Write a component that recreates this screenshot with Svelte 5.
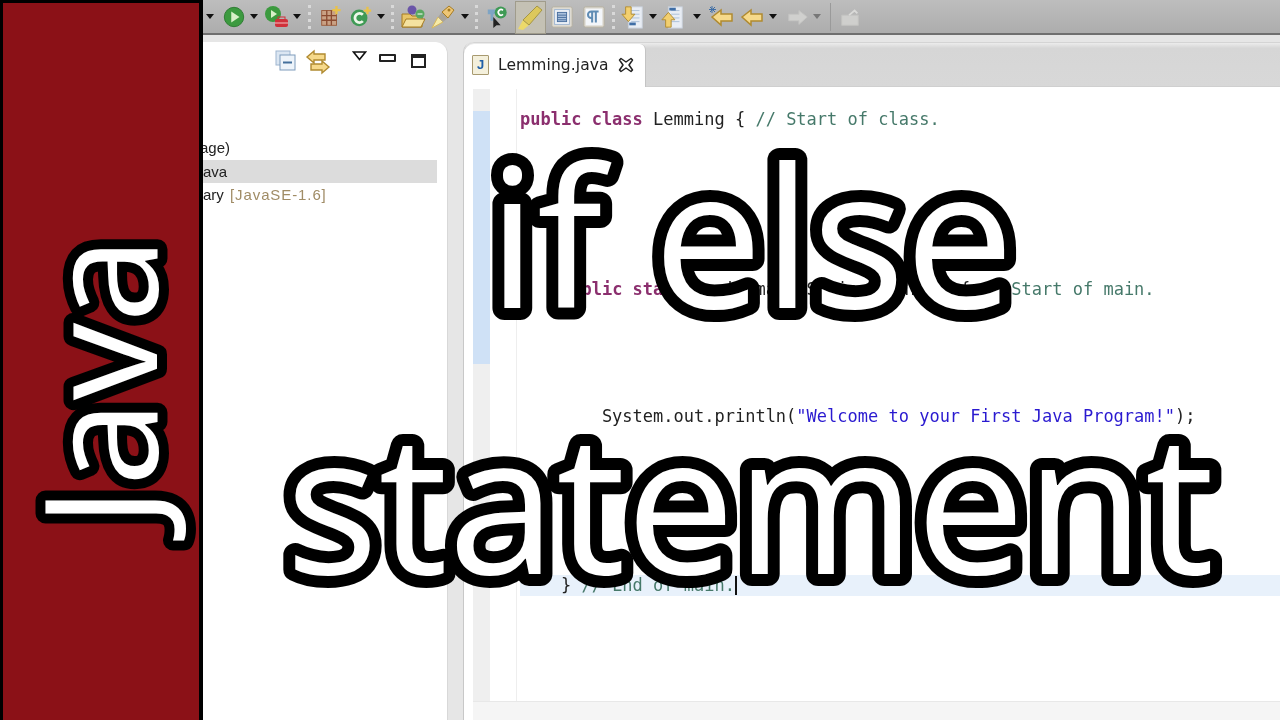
<script lang="ts">
  // toolbar icons by centre x, so the gaps come out of the data
  const tools = [
    { k: 'drop', x: 210, s: 8 }, { k: 'run', x: 234, s: 24 }, { k: 'drop', x: 254, s: 8 },
    { k: 'ext', x: 276, s: 26 }, { k: 'drop', x: 297, s: 8 }, { k: 'sep', x: 309, s: 3 },
    { k: 'grid', x: 330, s: 24 }, { k: 'newc', x: 361, s: 24 }, { k: 'drop', x: 381, s: 8 },
    { k: 'sep', x: 392, s: 3 }, { k: 'open', x: 413, s: 26 }, { k: 'brush', x: 443, s: 26 },
    { k: 'drop', x: 465, s: 8 }, { k: 'sep', x: 476, s: 3 }, { k: 'hier', x: 497, s: 24 },
    { k: 'mark', x: 530, s: 31 }, { k: 'doc', x: 562, s: 24 }, { k: 'para', x: 594, s: 24 },
    { k: 'sep', x: 613, s: 3 }, { k: 'down', x: 633, s: 24 }, { k: 'drop', x: 653, s: 8 },
    { k: 'up', x: 673, s: 24 }, { k: 'drop', x: 697, s: 8 }, { k: 'last', x: 722, s: 26 },
    { k: 'back', x: 752, s: 26 }, { k: 'drop', x: 773, s: 8 }, { k: 'fwd', x: 798, s: 24 },
    { k: 'dropoff', x: 817, s: 8 }, { k: 'sepoff', x: 830, s: 2 }, { k: 'off', x: 850, s: 24 },
  ];
  const placed = tools.map((t, i) => {
    const prevEnd = i === 0 ? 0 : tools[i - 1].x + tools[i - 1].s / 2;
    return { ...t, gap: t.x - t.s / 2 - prevEnd };
  });
</script>

<div class="page">
  <header class="toolbar">
    {#each placed as t}
      <span class="tool" style={`margin-left:${t.gap}px;width:${t.s}px`}>
        {#if t.k === 'drop' || t.k === 'dropoff'}
          <svg viewBox="0 0 8 5" width="8" height="5"><path d="M0 0h8L4 5z" fill={t.k === 'drop' ? '#111' : '#777'} /></svg>
        {:else if t.k === 'sep'}
          <i class="dots"></i>
        {:else if t.k === 'sepoff'}
          <i class="rule"></i>
        {:else if t.k === 'mark'}
          <svg class="markicon" viewBox="0 0 31 33" width="31" height="33">
            <rect x="0.500" y="0.500" width="30" height="32" fill="#c4c1b4" stroke="#a09c8c" />
            <path d="M3 28l5-9 6 5-6 5z" fill="#ecd96a" />
            <path d="M8 19L22 5l5 4-13 15z" fill="#ddc85c" stroke="#a59645" />
          </svg>
        {:else}
          <svg viewBox="0 0 26 26" width={t.s} height="26">
            {#if t.k === 'run'}
              <circle cx="13" cy="13" r="10.500" fill="#3c9a3f" stroke="#2b7a30" />
              <path d="M10 7l9 6-9 6z" fill="#d8f0c8" />
            {:else if t.k === 'ext'}
              <circle cx="10" cy="10" r="8" fill="#3c9a3f" />
              <path d="M8 6l6 4-6 4z" fill="#d8f0c8" />
              <rect x="12" y="15" width="13" height="8" rx="2" fill="#d0303a" />
              <rect x="15" y="13" width="7" height="3" fill="none" stroke="#d0303a" />
              <path d="M12 19h13" stroke="#f3c0c0" />
            {:else if t.k === 'grid'}
              <rect x="4" y="6" width="16" height="16" fill="#c9a184" stroke="#9a5b3b" />
              <path d="M9.500 6v16M14.500 6v16M4 11.500h16M4 16.500h16" stroke="#8a4a30" stroke-width="1.400" />
              <path d="M20 1v9M15.500 5.500h9" stroke="#e9c24a" stroke-width="2.500" />
            {:else if t.k === 'newc'}
              <circle cx="11" cy="14" r="9" fill="#3f9a55" />
              <path d="M15 10.500a5 5 0 1 0 0 7" fill="none" stroke="#eef7ea" stroke-width="3" />
              <path d="M20 2v8M16 6h8" stroke="#e9c24a" stroke-width="2.500" />
            {:else if t.k === 'open'}
              <path d="M2 10h8l2 2h10v11H2z" fill="#e8c568" stroke="#a67c22" />
              <path d="M2 23l4-8h19l-4 8z" fill="#f5e2a0" stroke="#a67c22" />
              <circle cx="12" cy="6" r="4.500" fill="#6a55a8" />
              <circle cx="20" cy="10" r="4.500" fill="#58a860" />
              <path d="M17.500 10h5" stroke="#fff" />
            {:else if t.k === 'brush'}
              <path d="M2 24l6-11 5 5z" fill="#f6eaa8" stroke="#d8b85a" />
              <path d="M8 13l4-5 6 6-5 4z" fill="#a9a49a" />
              <path d="M12 8l7-6 5 4-6 8z" fill="#eec675" stroke="#a67c22" />
              <circle cx="19" cy="6" r="1.500" fill="#a67c22" />
            {:else if t.k === 'hier'}
              <path d="M3 5h9v5H9v7H6v-7H3z" fill="#7ea4c4" />
              <circle cx="17" cy="8" r="6.500" fill="#3f9a55" />
              <path d="M19.500 5.800a3 3 0 1 0 0 4.400" fill="none" stroke="#fff" stroke-width="1.800" />
              <path d="M9 13v12l3.500-3 4.500 0z" fill="#222" />
            {:else if t.k === 'doc'}
              <rect x="2" y="2" width="22" height="22" rx="2" fill="#dedbd2" stroke="#b3ae9e" />
              <rect x="5" y="5" width="16" height="16" fill="#eef2f8" stroke="#9db4d0" />
              <rect x="8" y="8" width="10" height="10" fill="#a9c0dc" stroke="#456c9c" />
              <path d="M8 11h10M8 13.500h10M8 16h10" stroke="#456c9c" />
            {:else if t.k === 'para'}
              <rect x="2" y="2" width="22" height="22" rx="2" fill="#dedbd2" stroke="#b3ae9e" />
              <rect x="4" y="4" width="18" height="18" fill="#f3f6fa" />
              <path d="M11 19V7h-1a3.500 3.500 0 0 0 0 7h1M11 7h7M15 7v12" fill="none" stroke="#5f8cb4" stroke-width="2.200" />
            {:else if t.k === 'down' || t.k === 'up'}
              <rect x="8" y="2" width="15" height="23" fill="#e8edf4" stroke="#c9d1dc" />
              <path d="M11 6h9M11 10h9M11 14h9M11 18h9" stroke="#a9bfd8" />
              <rect x="9" y={t.k === 'down' ? 19 : 3} width="7" height="3" fill="#3f6ea6" />
              {#if t.k === 'down'}
                <path d="M5 2h6v8h4l-7 8-7-8h4z" fill="#f2cf6f" stroke="#b08a30" />
              {:else}
                <path d="M8 8l7 8h-4v8H5v-8H1z" fill="#f2cf6f" stroke="#b08a30" />
              {/if}
            {:else if t.k === 'last' || t.k === 'back'}
              <path d="M3 13l9-7v4h11v7H12v4z" fill="#f6d98a" stroke="#b08a30" stroke-width="1.500" />
              {#if t.k === 'last'}
                <path d="M3 2v7M0 5.500h7M1 3l5 5M6 3L1 8" stroke="#3f6ea6" />
              {/if}
            {:else if t.k === 'fwd'}
              <path d="M23 13l-9-7v4H3v7h11v4z" fill="#d0d0ce" stroke="#c4c4c2" />
            {:else if t.k === 'off'}
              <path d="M4 11h18v11H4z" fill="#cfcfcd" stroke="#c2c2c0" />
              <path d="M12 11l6-5 3 3" fill="none" stroke="#dadad8" stroke-width="2" />
            {/if}
          </svg>
        {/if}
      </span>
    {/each}
  </header>

  <div class="workbench">
    <aside class="explorer">
      <div class="view-tools">
        <svg viewBox="0 0 22 22" width="22" height="22">
          <rect x="1" y="1" width="14" height="14" fill="#dbe6f2" stroke="#9fb6cf" />
          <rect x="5" y="5" width="15" height="15" fill="#eef4fa" stroke="#7e9cbc" />
          <path d="M8 12.500h9" stroke="#44709c" stroke-width="2" />
        </svg>
        <svg class="link" viewBox="0 0 26 26" width="26" height="26">
          <path d="M2 8l7-6v3h11v6H9v3z" fill="#f6d98a" stroke="#b08a30" stroke-width="1.400" />
          <path d="M24 18l-7-6v3H6v6h11v3z" fill="#f6d98a" stroke="#b08a30" stroke-width="1.400" />
        </svg>
        <svg class="tri" viewBox="0 0 15 10" width="15" height="10"><path d="M1.500 1h12L7.500 8.500z" fill="#fff" stroke="#111" stroke-width="1.600" /></svg>
        <span class="min"></span>
        <span class="max"></span>
      </div>
      <ul class="tree">
        <li class="pkg">age)</li>
        <li class="sel">ava</li>
        <li>ary <span class="lib">[JavaSE-1.6]</span></li>
      </ul>
    </aside>

    <main class="editor">
      <div class="tabs">
        <div class="tab">
          <span class="jicon">J</span>
          <span class="tabname">Lemming.java</span>
          <svg viewBox="0 0 16 16" width="16" height="16"><path d="M3 1.500L8 5l5-3.500 1.500 1.500L11 8l3.500 5-1.500 1.500L8 11l-5 3.500L1.500 13 5 8 1.500 3z" fill="#fff" stroke="#222" stroke-width="1.500" stroke-linejoin="round" /></svg>
        </div>
      </div>
      <div class="pane">
        <div class="gutter"><div class="fold"></div></div>
        <div class="margin"></div>
        <pre class="code"><span class="line"><b>public class</b> Lemming &#123; <em>// Start of class.</em></span>
<span class="line"> </span>
<span class="line"> </span>
<span class="line"> </span>
<span class="line">    <b>public static</b> void main(String[] args) &#123; <em>// Start of main.</em></span>
<span class="line"> </span>
<span class="line"> </span>
<span class="line">        System.out.println(<u>"Welcome to your First Java Program!"</u>);</span>
<span class="line"> </span>
<span class="line"> </span>
<span class="line"> </span>
<span class="line cur">    &#125; <em>// End of main.</em><i class="caret"></i></span></pre>
      </div>
      <div class="editor-foot"></div>
    </main>
  </div>

  <div class="banner"></div>
  <svg class="overlay" viewBox="0 0 1280 720" width="1280" height="720">
    <text class="big java" transform="translate(157 528) rotate(-90)">Java</text>
    <text class="big" x="751" y="308" text-anchor="middle">if else</text>
    <text class="big" x="750" y="574" text-anchor="middle">statement</text>
  </svg>
</div>

<style>
  :global(body) { margin: 0; }
  .page {
    position: relative;
    width: 1280px;
    height: 720px;
    overflow: hidden;
    background: #eeeeee;
    font-family: "DejaVu Sans", sans-serif;
  }

  .toolbar {
    display: flex;
    align-items: center;
    height: 33px;
    background: linear-gradient(#bdbdbd, #adadad);
    border-bottom: 2px solid #6f6f6f;
    filter: blur(0.5px);
  }
  .tool { position: relative; display: flex; justify-content: center; align-items: center; flex: none; }
  .dots { display: block; width: 3px; height: 24px; background: repeating-linear-gradient(#d9d9d9 0 3px, transparent 3px 7px); }
  .rule { display: block; width: 1px; height: 28px; background: #9a9a9a; }
  .markicon { flex: none; margin-top: 2px; }

  .workbench { display: flex; height: 685px; padding-top: 7px; box-sizing: border-box; background: #e6e6e6; }
  .explorer {
    width: 244px;
    margin-left: 203px;
    background: #fff;
    border-top-right-radius: 12px;
    border-right: 1px solid #d8d8d8;
    flex: none;
  }
  .view-tools { display: flex; align-items: flex-start; height: 40px; padding: 8px 0 0 72px; box-sizing: border-box; filter: blur(0.4px); }
  .link { margin-left: 8px; margin-top: -1px; }
  .tri { margin-left: 21px; margin-top: 1px; }
  .min { width: 13px; height: 4px; border: 2px solid #222; border-radius: 1px; margin: 4px 0 0 12px; background: #fff; }
  .max { width: 11px; height: 8px; border: 2px solid #222; border-top-width: 4px; margin: 4px 0 0 15px; background: #fff; }

  .tree {
    list-style: none;
    margin: 54px 0 0;
    padding: 0;
    width: 234px;
    overflow: hidden;
    font-family: "Liberation Sans", sans-serif;
    font-size: 15px;
    color: #222;
    filter: blur(0.3px);
  }
  .tree li { height: 24px; line-height: 24px; }
  .tree .pkg { text-indent: -3px; }
  .tree .sel { background: #dcdcdc; height: 23px; line-height: 23px; }
  .lib { color: #a08c66; letter-spacing: 0.900px; margin-left: 2px; }

  .editor {
    margin-left: 15px;
    flex: 1;
    display: flex;
    flex-direction: column;
    min-width: 0;
    background: #fff;
    border-left: 1px solid #c8c8c8;
    border-top-left-radius: 10px;
  }
  .tabs {
    height: 45px;
    flex: none;
    display: flex;
    align-items: flex-end;
    background: linear-gradient(#ececec, #d6d6d6 12%, #d8d8d8);
    border-top: 1px solid #d4d4d4;
    box-sizing: border-box;
    border-top-left-radius: 10px;
    border-bottom: 1px solid #cfcfcf;
  }
  .tab {
    display: flex;
    align-items: center;
    gap: 9px;
    height: 43px;
    width: 182px;
    box-sizing: border-box;
    padding: 0 0 2px 8px;
    background: #fff;
    border-radius: 10px 6px 0 0;
    border-right: 1px solid #c4c4c4;
    margin-bottom: -1px;
    filter: blur(0.3px);
  }
  .jicon {
    width: 17px;
    height: 20px;
    box-sizing: border-box;
    border: 1px solid #a89a70;
    background: #f4f0dc;
    border-radius: 1px;
    color: #1f5fa8;
    font: bold 13px/18px "Liberation Sans", sans-serif;
    text-align: center;
  }
  .tabname { font-size: 15.500px; font-family: "DejaVu Sans", sans-serif; color: #222; letter-spacing: 0.100px; }

  .pane { flex: 1; display: flex; background: #fff; margin-left: 9px; padding-top: 2px; min-height: 0; }
  .gutter { width: 17px; height: 100%; background: #efefef; flex: none; padding-top: 22px; box-sizing: border-box; }
  .fold { height: 253px; background: #cfe1f6; }
  .margin { width: 26px; flex: none; border-right: 1px solid #eeeeee; }
  .code {
    flex: 1;
    min-width: 0;
    margin: 0;
    padding: 20px 0 0 3px;
    font-family: "DejaVu Sans Mono", monospace;
    font-size: 17px;
    line-height: 21.200px;
    color: #222;
    filter: blur(0.35px);
  }
  .line { display: block; height: 21.200px; white-space: pre; }
  .code b { color: #8b2f6e; font-weight: bold; }
  .code em { color: #46796a; font-style: normal; }
  .code u { color: #2a1ad0; text-decoration: none; }
  .cur { background: #e8f1fb; }
  .caret { display: inline-block; width: 2px; height: 19px; background: #111; vertical-align: -4px; }
  .editor-foot { height: 18px; flex: none; background: #f5f5f5; border-top: 1px solid #e8e8e8; margin-left: 9px; }

  .banner {
    position: absolute;
    left: 0;
    top: 0;
    width: 203px;
    height: 720px;
    box-sizing: border-box;
    background: #8b1117;
    border: solid #000;
    border-width: 3px 4px 0 3px;
  }
  .overlay { position: absolute; left: 0; top: 0; }
  .big {
    font-family: "Open Sans", sans-serif;
    font-size: 195px;
    fill: #fff;
    stroke: #000;
    stroke-width: 24px;
    stroke-linejoin: round;
    paint-order: stroke fill;
  }
  .java { font-size: 155px; stroke-width: 20px; }
</style>
